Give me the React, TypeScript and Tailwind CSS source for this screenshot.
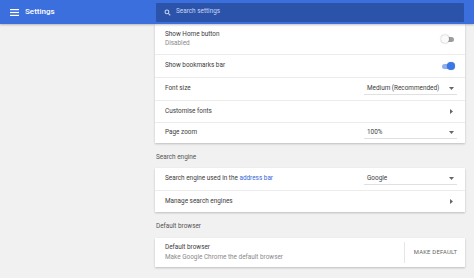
import React from 'react';

const Toggle = ({ on }: { on: boolean }) => (
  <div className="relative w-[14px] h-[8px] flex items-center">
    <div className={on ? "w-[12px] h-[5px] rounded-full bg-[#8fb0ee] ml-[1px]" : "w-[12px] h-[5px] rounded-full bg-[#9e9e9e] ml-[1px]"} />
    <div
      className={
        on
          ? "absolute right-0 top-0 w-[8px] h-[8px] rounded-full bg-[#3b78e7] shadow-[0_0_1px_rgba(0,0,0,0.4)]"
          : "absolute left-0 top-0 w-[8px] h-[8px] rounded-full bg-[#fafafa] shadow-[0_0_1.5px_rgba(0,0,0,0.45)]"
      }
    />
  </div>
);

const Caret = () => (
  <svg width="5" height="3" viewBox="0 0 5 3" className="fill-[#666]">
    <path d="M0 0h5L2.5 3z" />
  </svg>
);

const Arrow = () => (
  <svg width="3" height="5" viewBox="0 0 3 5" className="fill-[#666]">
    <path d="M0 0v5l3-2.5z" />
  </svg>
);

const Select = ({ value }: { value: string }) => (
  <div className="w-[93px] h-[12px] flex items-center justify-between border-b border-[#e0e0e0] pl-[3px] pr-[3px] mr-[-2px]">
    <span className="text-[6.4px] text-[#3c3c3c]">{value}</span>
    <Caret />
  </div>
);

const Row = ({ children, h, first }: { children: React.ReactNode; h: string; first?: boolean }) => (
  <div className={`${h} flex items-center justify-between px-[10px] ${first ? "" : "border-t border-[#ececec]"}`}>
    {children}
  </div>
);

const Label = ({ children }: { children: React.ReactNode }) => (
  <span className="text-[6.4px] text-[#3c3c3c]">{children}</span>
);

export default function App() {
  return (
    <div
      className="w-[474px] h-[278px] overflow-hidden bg-[#f1f1f1] flex flex-col"
      style={{ fontFamily: 'Roboto, "Liberation Sans", sans-serif' }}
    >
      {/* Header */}
      <div className="h-[24px] shrink-0 bg-[#3b6fdd] flex items-center shadow-[0_1px_2px_rgba(0,0,0,0.25)] z-10">
        <div className="w-[156px] flex items-center pl-[10px] gap-[6px]">
          <svg width="9" height="7" viewBox="0 0 9 7" className="fill-white">
            <rect y="0" width="9" height="1.2" />
            <rect y="2.9" width="9" height="1.2" />
            <rect y="5.8" width="9" height="1.2" />
          </svg>
          <span className="text-[8px] font-medium text-white">Settings</span>
        </div>
        <div className="w-[308px] h-[19px] bg-[#2b53aa] rounded-[1px] flex items-center pl-[8px] gap-[5px]">
          <svg width="7" height="7" viewBox="0 0 24 24" fill="none" stroke="#c9d6f2" strokeWidth="3.5">
            <circle cx="10" cy="10" r="6.5" />
            <path d="M15 15l6.5 6.5" />
          </svg>
          <span className="text-[6.4px] text-[#c9d6f2]">Search settings</span>
        </div>
      </div>

      {/* Body */}
      <div className="flex flex-1">
        <div className="w-[155px] shrink-0" />
        <div className="w-[310px] flex flex-col">
          <div className="bg-white shadow-[0_1px_2px_rgba(0,0,0,0.22)]">
            <Row h="h-[30px]" first>
              <div className="flex flex-col leading-[9px]">
                <Label>Show Home button</Label>
                <span className="text-[6.4px] text-[#8a8a8a]">Disabled</span>
              </div>
              <Toggle on={false} />
            </Row>
            <Row h="h-[23px]">
              <Label>Show bookmarks bar</Label>
              <Toggle on />
            </Row>
            <Row h="h-[23px]">
              <Label>Font size</Label>
              <Select value="Medium (Recommended)" />
            </Row>
            <Row h="h-[22px]">
              <Label>Customise fonts</Label>
              <div className="pr-[2px]">
                <Arrow />
              </div>
            </Row>
            <Row h="h-[21px]">
              <Label>Page zoom</Label>
              <Select value="100%" />
            </Row>
          </div>

          <div className="h-[25px] flex items-center pl-[1px] pt-[4px]">
            <span className="text-[6.4px] text-[#555]">Search engine</span>
          </div>
          <div className="bg-white shadow-[0_1px_2px_rgba(0,0,0,0.22)]">
            <Row h="h-[22px]" first>
              <Label>
                Search engine used in the <span className="text-[#3367d6]">address bar</span>
              </Label>
              <Select value="Google" />
            </Row>
            <Row h="h-[22px]">
              <Label>Manage search engines</Label>
              <div className="pr-[2px]">
                <Arrow />
              </div>
            </Row>
          </div>

          <div className="h-[26px] flex items-center pl-[1px] pt-[4px]">
            <span className="text-[6.4px] text-[#555]">Default browser</span>
          </div>
          <div className="bg-white shadow-[0_1px_2px_rgba(0,0,0,0.22)] h-[29px] flex">
            <div className="flex-1 flex flex-col justify-center leading-[9.5px] px-[10px]">
              <Label>Default browser</Label>
              <span className="text-[6.4px] text-[#8a8a8a]">Make Google Chrome the default browser</span>
            </div>
            <div className="my-[4px] border-l border-[#e6e6e6] w-[61px] flex items-center justify-center pl-[1px]">
              <span className="text-[5.9px] text-[#666] tracking-[0.2px]">MAKE DEFAULT</span>
            </div>
          </div>
        </div>
        <div className="flex-1" />
      </div>
    </div>
  );
}
